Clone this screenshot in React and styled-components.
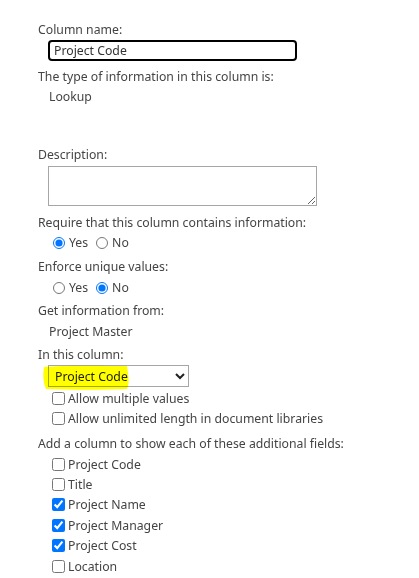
import React from 'react';
import styled, {createGlobalStyle} from 'styled-components';

const GlobalStyle = createGlobalStyle`
  body {
    margin: 0;
    background: #fff;
    font-family: "Noto Sans", "Open Sans", sans-serif;
  }
`;

const Form = styled.form`
  padding: 20px 0 0 38px;
  font-size: 12.25px;
  color: #444;
  width: 360px;
`;

const Label = styled.div`
  line-height: 20px;
  margin-top: ${p => p.gap || 0}px;
  white-space: nowrap;
`;

const Value = styled.div`
  line-height: 20px;
  padding-left: 11px;
  margin-top: ${p => p.gap || 0}px;
  color: #444;
`;

const Indent = styled.div`
  padding-left: 10px;
  margin-top: ${p => p.gap || 0}px;
`;

const TextInput = styled.input`
  box-sizing: border-box;
  width: 249px;
  height: 21px;
  border: 2px solid #000;
  border-radius: 4px;
  padding: 0 4px;
  font: inherit;
  color: #333;
  outline: none;
  display: block;
`;

const TextArea = styled.textarea`
  box-sizing: border-box;
  display: block;
  width: 269px;
  height: 40px;
  border: 1px solid #a6a6a6;
  border-radius: 0;
  font: inherit;
  margin: 0;
`;

const OptionRow = styled.div`
  display: flex;
  align-items: center;
  height: 20px;
  line-height: 20px;
`;

const Choice = styled.label`
  display: inline-flex;
  align-items: center;
  margin-right: 3px;
  input {
    margin: 0 4px 0 5px;
    width: 12px;
    height: 12px;
  }
`;

const CheckItem = styled.label`
  display: flex;
  align-items: center;
  height: ${p => p.h || 20}px;
  margin-top: ${p => p.gap || 0}px;
  input {
    margin: 0 3px 0 4px;
    width: 13px;
    height: 13px;
  }
`;

const SelectWrap = styled.div`
  position: relative;
  width: 141px;
  height: 22px;
`;

const Select = styled.select`
  box-sizing: border-box;
  width: 141px;
  height: 22px;
  border: 1px solid #a6a6a6;
  border-radius: 0;
  background: #fff;
  font: inherit;
  color: #222;
  padding: 0 2px;
`;

const Highlight = styled.svg`
  position: absolute;
  left: -5px;
  top: 0;
  pointer-events: none;
  mix-blend-mode: multiply;
`;

const fields = [
  {name: 'Project Code', checked: false},
  {name: 'Title', checked: false},
  {name: 'Project Name', checked: true},
  {name: 'Project Manager', checked: true},
  {name: 'Project Cost', checked: true},
  {name: 'Location', checked: false},
];

export default function App() {
  return (
    <>
      <GlobalStyle/>
      <Form>
        <Label>Column name:</Label>
        <Indent gap={0}>
          <TextInput defaultValue="Project Code"/>
        </Indent>
        <Label gap={6}>The type of information in this column is:</Label>
        <Value>Lookup</Value>

        <Label gap={38}>Description:</Label>
        <Indent gap={1}>
          <TextArea/>
        </Indent>

        <Label gap={7}>Require that this column contains information:</Label>
        <Indent>
          <OptionRow>
            <Choice><input type="radio" name="req" defaultChecked/>Yes</Choice>
            <Choice><input type="radio" name="req"/>No</Choice>
          </OptionRow>
        </Indent>

        <Label gap={4}>Enforce unique values:</Label>
        <Indent gap={1}>
          <OptionRow>
            <Choice><input type="radio" name="uniq"/>Yes</Choice>
            <Choice><input type="radio" name="uniq" defaultChecked/>No</Choice>
          </OptionRow>
        </Indent>

        <Label gap={3}>Get information from:</Label>
        <Value gap={1}>Project Master</Value>

        <Label gap={3}>In this column:</Label>
        <Indent>
          <SelectWrap>
            <Select defaultValue="Project Code">
              <option>Project Code</option>
              <option>Title</option>
              <option>Project Name</option>
            </Select>
            <Highlight width="92" height="25" viewBox="0 0 92 25">
              <path d="M1 2 C 20 0, 60 1, 84 1 L 85 8 C 86 14, 86 20, 84 24 C 60 25, 30 25, 3 24 C 0 17, 0 9, 1 2 Z" fill="#ffff00"/>
            </Highlight>
          </SelectWrap>
          <CheckItem gap={1}><input type="checkbox"/>Allow multiple values</CheckItem>
          <CheckItem><input type="checkbox"/>Allow unlimited length in document libraries</CheckItem>
        </Indent>

        <Label gap={6}>Add a column to show each of these additional fields:</Label>
        <Indent>
          {fields.map(f => (
            <CheckItem key={f.name} h={20.4}>
              <input type="checkbox" defaultChecked={f.checked}/>{f.name}
            </CheckItem>
          ))}
        </Indent>
      </Form>
    </>
  );
}
